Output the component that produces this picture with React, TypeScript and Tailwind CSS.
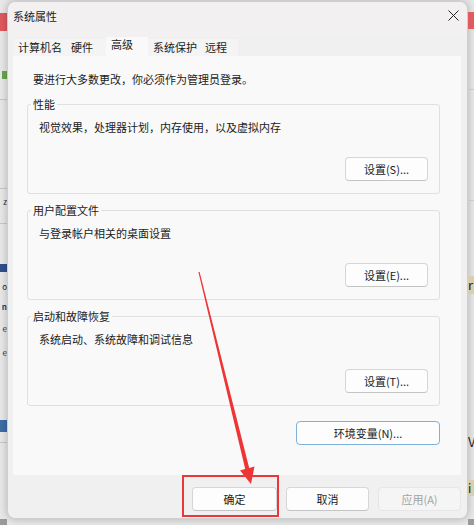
import React from "react";

const font = {
  fontFamily: '"Noto Sans CJK SC", "Noto Sans", sans-serif',
};

function Btn({
  children,
  className = "",
  disabled = false,
}: {
  children: React.ReactNode;
  className?: string;
  disabled?: boolean;
}) {
  return (
    <div
      className={
        "flex h-[24px] items-center justify-center rounded-[4px] border text-[11px] leading-[14px] " +
        (disabled
          ? "border-[#e6e6e6] bg-[#f5f5f5] text-[#a3a3a3] "
          : "border-[#d6d6d6] border-b-[#c4c4c4] bg-[#fdfdfd] text-[#1b1b1b] ") +
        className
      }
    >
      {children}
    </div>
  );
}

function Group({
  title,
  desc,
  button,
  className = "",
}: {
  title: string;
  desc: string;
  button: string;
  className?: string;
}) {
  return (
    <div
      className={
        "ml-[14px] flex h-[90px] w-[413px] flex-col rounded-[3px] border border-[#e0e0e0] " +
        className
      }
    >
      <div className="-mt-[8px] ml-[3px] flex">
        <span className="bg-[#f9f9f9] px-[2px] text-[11px] leading-[14px] text-[#1b1b1b]">
          {title}
        </span>
      </div>
      <div className="ml-[11px] mt-[9px] text-[11px] leading-[14px] text-[#1b1b1b]">
        {desc}
      </div>
      <div className="mb-[12px] mr-[11px] mt-auto flex justify-end">
        <Btn className="w-[83px]">{button}</Btn>
      </div>
    </div>
  );
}

function Tab({
  label,
  width,
  active = false,
}: {
  label: string;
  width: number;
  active?: boolean;
}) {
  const w: Record<number, string> = {
    53: "w-[53px]",
    40: "w-[40px]",
    42: "w-[42px]",
    52: "w-[52px]",
    38: "w-[38px]",
  };
  return (
    <div
      className={
        w[width] +
        " text-[11px] leading-[14px] text-[#1b1b1b] " +
        (active
          ? "h-[19px] bg-[#f9f9f9] pl-[5px] pt-0"
          : "h-[17px] bg-[#f4f4f4] pl-[5px] pt-[1px]")
      }
    >
      {label}
    </div>
  );
}

export default function App() {
  return (
    <div
      className="relative flex h-[525px] w-[474px] overflow-hidden bg-[#e9e9e9]"
      style={font}
    >
      {/* desktop content peeking out on the left */}
      <div className="flex w-[7px] shrink-0 flex-col items-end overflow-hidden">
        <div className="mt-[13px] h-[18px] w-full bg-[#df5b5f]" />
        <div className="mt-[40px] h-[8px] w-[5px] bg-[#6aa84f]" />
        <div className="mt-[20px] h-px w-full bg-[#c9c9c9]" />
        <div className="mt-[88px] h-px w-full bg-[#c9c9c9]" />
        <div className="mt-[6px] text-[8px] leading-[14px] text-[#333]">z</div>
        <div className="mt-[14px] h-px w-full bg-[#c9c9c9]" />
        <div className="mt-[40px] h-[8px] w-full bg-[#2f4f8f]" />
        <div className="mt-[6px] text-[8px] leading-[18px] text-[#222]">o</div>
        <div className="mt-[2px] text-[8px] font-bold leading-[18px] text-[#1f3c88]">n</div>
        <div className="mt-[4px] text-[8px] leading-[18px] text-[#333]">e</div>
        <div className="mt-[6px] text-[8px] leading-[18px] text-[#333]">e</div>
        <div className="mt-[58px] h-[12px] w-full bg-[#3b6fa8]" />
        <div className="mt-[10px] h-px w-full bg-[#c9c9c9]" />
        <div className="mt-auto h-[6px] w-full bg-[#9a9a9a]" />
      </div>

      {/* System Properties dialog */}
      <div className="mt-[1px] flex h-[518px] w-[461px] shrink-0 flex-col rounded-[8px] border border-[#cfcfcf] bg-[#f0f0f0] shadow-[0_0_8px_rgba(0,0,0,0.25)]">
        <div className="flex h-[35px] items-start justify-between rounded-t-[8px] bg-[#f2f0f0] pl-[5px] pt-[7px]">
          <span className="text-[11px] leading-[14px] text-[#1b1b1b]">系统属性</span>
          <svg
            width="11"
            height="11"
            viewBox="0 0 11 11"
            className="mr-[8px] mt-[1px]"
          >
            <path d="M0.5 0.5 L10.5 10.5 M10.5 0.5 L0.5 10.5" stroke="#222" strokeWidth="1" />
          </svg>
        </div>

        <div className="ml-[5px] flex h-[19px] items-end">
          <Tab label="计算机名" width={53} />
          <Tab label="硬件" width={40} />
          <Tab label="高级" width={42} active />
          <Tab label="系统保护" width={52} />
          <Tab label="远程" width={38} />
        </div>

        <div className="ml-[5px] flex h-[419px] w-[448px] flex-col bg-[#f9f9f9]">
          <div className="ml-[20px] mt-[16px] text-[11px] leading-[14px] text-[#1b1b1b]">
            要进行大多数更改，你必须作为管理员登录。
          </div>
          <Group
            className="mt-[18px]"
            title="性能"
            desc="视觉效果，处理器计划，内存使用，以及虚拟内存"
            button="设置(S)..."
          />
          <Group
            className="mt-[16px]"
            title="用户配置文件"
            desc="与登录帐户相关的桌面设置"
            button="设置(E)..."
          />
          <Group
            className="mt-[16px]"
            title="启动和故障恢复"
            desc="系统启动、系统故障和调试信息"
            button="设置(T)..."
          />
          <div className="ml-[14px] mt-[15px] flex w-[413px] justify-end">
            <div className="flex h-[24px] w-[144px] items-center justify-center rounded-[4px] border border-[#7fb0dc] bg-[#fdfdfd] text-[11px] leading-[14px] text-[#1b1b1b]">
              环境变量(N)...
            </div>
          </div>
        </div>

        <div className="flex flex-1 items-start justify-end gap-[9px] pr-[6px] pt-[12px]">
          <Btn className="w-[85px]">确定</Btn>
          <Btn className="w-[83px]">取消</Btn>
          <Btn className="w-[83px]" disabled>
            应用(A)
          </Btn>
        </div>
      </div>

      {/* desktop content peeking out on the right */}
      <div className="flex flex-1 flex-col overflow-hidden">
        <div className="mt-[12px] h-[17px] bg-[#df5b5f]" />
        <div className="mt-[60px] h-px bg-[#c9c9c9]" />
        <div className="mt-[110px] h-px bg-[#c9c9c9]" />
        <div className="mt-[75px] h-[18px] bg-[#d9cfae] text-[13px] leading-[18px] text-[#222]">r</div>
        <div className="mt-[140px] text-[13px] leading-[16px] text-[#222]">V</div>
        <div className="mt-[30px] h-[16px] bg-[#d9cfae] text-[12px] leading-[16px] text-[#222]">i</div>
        <div className="mt-auto h-[6px] bg-[#9a9a9a]" />
      </div>

      {/* red annotation: arrow pointing at the OK button and box around it */}
      <svg
        className="pointer-events-none absolute inset-0"
        width="474"
        height="525"
        viewBox="0 0 474 525"
      >
        <polygon
          points="198.4,272.1 199.6,271.9 249.2,468 254.5,466.6 251,484 240,470.4 245.2,469"
          fill="#ee3434"
        />
        <rect
          x="183"
          y="476"
          width="95"
          height="40"
          fill="none"
          stroke="#e8383c"
          strokeWidth="2"
        />
      </svg>
    </div>
  );
}
